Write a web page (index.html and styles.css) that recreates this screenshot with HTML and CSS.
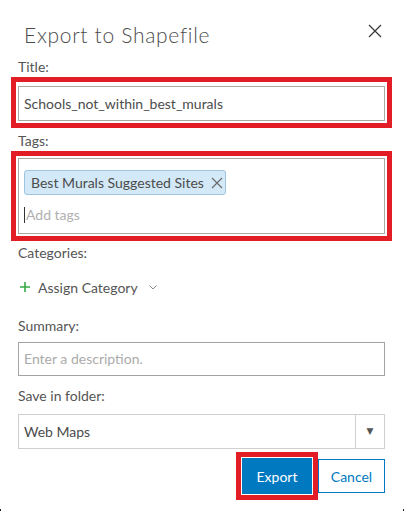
FILE: index.html
```html
<html>
	<head>
		<link rel="stylesheet" href="styles.css">
	</head>

	<body>
		<div class="Dialog">
			<div class="Dialog-header">
				<h1 class="Dialog-title">Export to Shapefile</h1>
				<span class="Close">
					<svg width="14" height="14" viewBox="0 0 14 14"><path d="M1 1 L13 13 M13 1 L1 13" stroke="#3a3a3a" stroke-width="1.3" fill="none"/></svg>
				</span>
			</div>

			<div class="Label">Title:</div>
			<div class="Highlight Highlight-title">
				<div class="Input">Schools_not_within_best_murals</div>
			</div>

			<div class="Label Label-tags">Tags:</div>
			<div class="Highlight Highlight-tags">
				<div class="TagBox">
					<span class="Tag">Best Murals Suggested Sites
						<svg width="12" height="12" viewBox="0 0 12 12"><path d="M1 1 L11 11 M11 1 L1 11" stroke="#6b6b6b" stroke-width="1.2" fill="none"/></svg>
					</span>
					<div class="TagEntry"><span class="Caret"></span>Add tags</div>
				</div>
			</div>

			<div class="Label Label-categories">Categories:</div>
			<div class="Assign">
				<svg class="Assign-plus" width="10" height="10" viewBox="0 0 10 10"><path d="M5 0 V10 M0 5 H10" stroke="#35ac46" stroke-width="1.6" fill="none"/></svg>
				<span>Assign Category</span>
				<svg class="Assign-chevron" width="8" height="5" viewBox="0 0 8 5"><path d="M0.5 0.5 L4 4 L7.5 0.5" stroke="#8a8a8a" stroke-width="1" fill="none"/></svg>
			</div>

			<div class="Label Label-summary">Summary:</div>
			<div class="Input Input-summary Placeholder">Enter a description.</div>

			<div class="Label Label-folder">Save in folder:</div>
			<div class="Select">
				<span class="Select-value">Web Maps</span>
				<span class="Select-arrow">&#9660;</span>
			</div>

			<div class="Buttons">
				<div class="Highlight Highlight-button">
					<span class="Btn Btn-primary">Export</span>
				</div>
				<span class="Btn Btn-cancel">Cancel</span>
			</div>

			<div class="Marks"></div>
		</div>
	</body>
</html>
```

FILE: styles.css
```css
body{
	margin: 0;
	background: #fff;
	font-family: Lato, "Noto Sans", sans-serif;
	color: #4c4c4c;
	font-size: 14px;
}
.Dialog{
	width: 404px;
	box-sizing: border-box;
	padding: 0 19px 0 18px;
}
.Dialog-header{
	display: flex;
	justify-content: space-between;
	align-items: flex-start;
	padding-top: 20px;
	height: 30px;
	margin-bottom: 7px;
}
.Dialog-title{
	margin: 0 0 0 6px;
	font-size: 21px;
	font-weight: 300;
	letter-spacing: 0.7px;
	line-height: 30px;
	color: #4c4c4c;
}
.Close{
	display: block;
	margin: 4px 3px 0 0;
	height: 14px;
}
.Close svg{
	display: block;
}
.Label{
	line-height: 20px;
	color: #555;
}
.Label-tags{ margin-top: 3px; }
.Label-categories{ margin-top: 2px; }
.Label-summary{ margin-top: 19px; }
.Label-folder{ margin-top: 10px; }

.Highlight{
	border: 5px solid #e21d26;
	padding: 2px;
	margin: 0 -7px;
}
.Highlight-title{ padding-top: 4px; }

.Input{
	height: 35px;
	box-sizing: border-box;
	border: 1px solid #a8a8a8;
	padding: 0 5px;
	line-height: 33px;
	color: #4c4c4c;
}
.Input-summary{
	height: 34px;
	line-height: 32px;
	margin-top: 6px;
	border-color: #a3a3a3;
}
.Placeholder{
	color: #ababab;
}

.TagBox{
	height: 76px;
	box-sizing: border-box;
	border: 1px solid #a8a8a8;
	padding: 11px 5px 0;
}
.Tag{
	display: inline-flex;
	align-items: center;
	gap: 7px;
	height: 25px;
	box-sizing: border-box;
	padding: 0 2px 0 6px;
	border: 1px solid #9fc4df;
	border-radius: 3px;
	background: #d3e9f8;
	color: #4c4c4c;
}
.Tag svg{
	display: block;
}
.TagEntry{
	display: flex;
	align-items: center;
	margin-top: 10px;
	line-height: 20px;
	color: #b0b0b0;
}
.Caret{
	display: inline-block;
	width: 1px;
	height: 16px;
	background: #333;
	margin-right: 1px;
}

.Assign{
	display: flex;
	align-items: center;
	margin-top: 14px;
	height: 20px;
	color: #555;
}
.Assign-plus{
	margin: 0 8px 0 2px;
}
.Assign-chevron{
	margin-left: 11px;
}

.Select{
	display: flex;
	height: 35px;
	box-sizing: border-box;
	margin-top: 8px;
	border: 1px solid #cfcfcf;
}
.Select-value{
	flex: 1;
	padding-left: 5px;
	line-height: 33px;
	color: #4c4c4c;
}
.Select-arrow{
	width: 28px;
	border-left: 1px solid #cfcfcf;
	text-align: center;
	line-height: 33px;
	font-size: 9px;
	color: #555;
	font-family: "DejaVu Sans", sans-serif;
}

.Buttons{
	display: flex;
	justify-content: flex-end;
	align-items: center;
	margin-top: 3px;
}
.Highlight-button{
	margin: 0;
	padding: 1px;
}
.Btn{
	display: flex;
	align-items: center;
	justify-content: center;
	box-sizing: border-box;
}
.Btn-primary{
	width: 70px;
	height: 36px;
	background: #0079c1;
	color: #fff;
}
.Btn-cancel{
	width: 67px;
	height: 34px;
	border: 1px solid #0079c1;
	color: #0079c1;
}

.Marks{
	height: 3px;
	margin: 9px -19px 0 -18px;
	border-left: 1px solid #222;
	border-right: 1px solid #222;
}
```
